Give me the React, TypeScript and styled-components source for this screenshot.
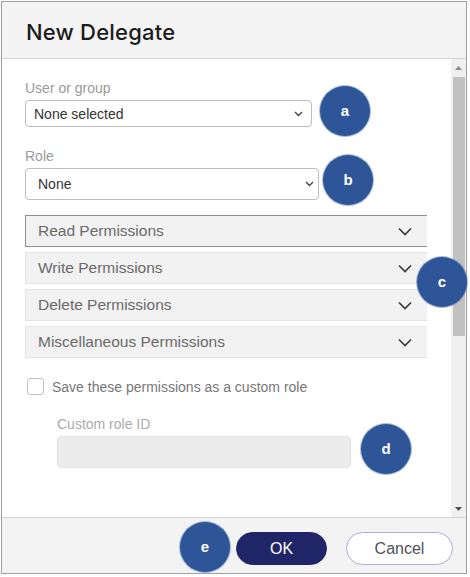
import React from "react";
import styled, { createGlobalStyle } from "styled-components";

const Global = createGlobalStyle`
  html, body { margin: 0; padding: 0; background: #fff; }
  body { padding: 1px 0 0 1px; font-family: "Liberation Sans", Arial, sans-serif; }
  * { box-sizing: border-box; }
`;

const Dialog = styled.div`
  position: relative;
  width: 466px;
  height: 573px;
  border: 1px solid #a0a0a0;
  display: flex;
  flex-direction: column;
  background: #fff;
`;

const Header = styled.div`
  flex: none;
  height: 57px;
  background: #f4f4f4;
  border-bottom: 1px solid #d3d3d3;
  display: flex;
  align-items: center;
  padding: 4px 0 0 24px;
`;

const Title = styled.h1`
  margin: 0;
  font-family: Inter, "Liberation Sans", sans-serif;
  font-size: 22px;
  font-weight: 500;
  color: #1c1c1c;
  letter-spacing: 0.2px;
`;

const Body = styled.div`
  flex: 1;
  min-height: 0;
  display: flex;
`;

const Content = styled.div`
  flex: 1;
  overflow: hidden;
  padding: 21px 0 0 23px;
  display: flex;
  flex-direction: column;
`;

const Label = styled.div<{ $top?: number; $light?: boolean }>`
  font-size: 14px;
  line-height: 16px;
  color: ${(p) => (p.$light ? "#ababab" : "#9a9a9a")};
  margin-top: ${(p) => p.$top ?? 0}px;
  margin-bottom: 4px;
`;

const Select = styled.div<{ $w: number; $h: number; $pl: number; $pr: number }>`
  width: ${(p) => p.$w}px;
  height: ${(p) => p.$h}px;
  border: 1px solid #bcbcbc;
  border-radius: 4px;
  display: flex;
  align-items: center;
  justify-content: space-between;
  padding: 0 ${(p) => p.$pr}px 0 ${(p) => p.$pl}px;
  font-size: 14px;
  color: #333;
  background: #fff;
`;

const Accordion = styled.div`
  margin-top: 15px;
  display: flex;
  flex-direction: column;
  gap: 5px;
`;

const Row = styled.div<{ $focused?: boolean }>`
  width: 402px;
  height: 32px;
  background: #f2f2f2;
  border: 1px solid ${(p) => (p.$focused ? "#8e8e8e" : "#e4e4e4")};
  border-right: none;
  display: flex;
  align-items: center;
  justify-content: space-between;
  padding: 0 15px 0 12px;
  font-size: 15.5px;
  color: #6a6a6a;
`;

const CheckRow = styled.label`
  margin-top: 20px;
  margin-left: 2px;
  display: flex;
  align-items: center;
  gap: 8px;
  font-size: 14px;
  line-height: 16px;
  color: #777;
`;

const Box = styled.span`
  width: 17px;
  height: 17px;
  border: 1px solid #c2c2c2;
  border-radius: 3px;
  background: #fff;
`;

const Custom = styled.div`
  margin-left: 32px;
  margin-top: 21px;
  display: flex;
  flex-direction: column;
`;

const Input = styled.div`
  width: 294px;
  height: 32px;
  background: #ececec;
  border: 1px solid #e3e3e3;
  border-radius: 4px;
`;

const Scrollbar = styled.div`
  flex: none;
  width: 15px;
  background: #f0f0f0;
  display: flex;
  flex-direction: column;
  align-items: center;
`;

const Arrow = styled.div`
  height: 17px;
  display: flex;
  align-items: center;
  justify-content: center;
`;

const Thumb = styled.div`
  width: 12px;
  height: 259px;
  margin-top: 1px;
  background: #c1c1c1;
`;

const Spacer = styled.div`
  flex: 1;
`;

const Footer = styled.div`
  flex: none;
  height: 56px;
  background: #f3f3f3;
  border-top: 1px solid #d5d5d5;
  display: flex;
  justify-content: flex-end;
  align-items: flex-start;
  padding: 14px 13px 0 0;
  gap: 19px;
`;

const Button = styled.button<{ $primary?: boolean; $w: number }>`
  width: ${(p) => p.$w}px;
  height: 33px;
  border-radius: 17px;
  font-family: "Liberation Sans", Arial, sans-serif;
  font-size: 16px;
  cursor: pointer;
  background: ${(p) => (p.$primary ? "#1f2566" : "#fff")};
  color: ${(p) => (p.$primary ? "#fff" : "#50505c")};
  border: ${(p) => (p.$primary ? "1px solid #1f2566" : "1.5px solid #a9acd8")};
`;

const Callout = styled.div<{ $x: number; $y: number }>`
  position: absolute;
  left: ${(p) => p.$x}px;
  top: ${(p) => p.$y}px;
  width: 50px;
  height: 50px;
  border-radius: 50%;
  background: #2e5597;
  box-shadow: 0 0 0 1px rgba(80, 120, 180, 0.5);
  color: #fff;
  display: flex;
  align-items: center;
  justify-content: center;
  font-family: "Liberation Sans", Arial, sans-serif;
  font-weight: 700;
  font-size: 15px;
  padding-bottom: 1px;
`;

const SmallChevron = () => (
  <svg width="9" height="6" viewBox="0 0 9 6">
    <polyline points="1,1 4.5,4.5 8,1" fill="none" stroke="#444" strokeWidth="1.4" />
  </svg>
);

const BigChevron = () => (
  <svg width="14" height="9" viewBox="0 0 14 9">
    <polyline points="1,1.5 7,7.5 13,1.5" fill="none" stroke="#3a3a3a" strokeWidth="1.7" />
  </svg>
);

const UpTri = () => (
  <svg width="7" height="4" viewBox="0 0 7 4">
    <polygon points="0,4 3.5,0 7,4" fill="#8a8a8a" />
  </svg>
);

const DownTri = () => (
  <svg width="7" height="4" viewBox="0 0 7 4">
    <polygon points="0,0 7,0 3.5,4" fill="#505050" />
  </svg>
);

const permissions = [
  "Read Permissions",
  "Write Permissions",
  "Delete Permissions",
  "Miscellaneous Permissions",
];

export default function App() {
  return (
    <>
      <Global />
      <Dialog>
        <Header>
          <Title>New Delegate</Title>
        </Header>
        <Body>
          <Content>
            <Label>User or group</Label>
            <Select $w={287} $h={27} $pl={8} $pr={8}>
              <span>None selected</span>
              <SmallChevron />
            </Select>
            <Label $top={21}>Role</Label>
            <Select $w={294} $h={32} $pl={12} $pr={4}>
              <span>None</span>
              <SmallChevron />
            </Select>
            <Accordion>
              {permissions.map((p, i) => (
                <Row key={p} $focused={i === 0}>
                  <span>{p}</span>
                  <BigChevron />
                </Row>
              ))}
            </Accordion>
            <CheckRow>
              <Box />
              <span>Save these permissions as a custom role</span>
            </CheckRow>
            <Custom>
              <Label $light>Custom role ID</Label>
              <Input />
            </Custom>
          </Content>
          <Scrollbar>
            <Arrow>
              <UpTri />
            </Arrow>
            <Thumb />
            <Spacer />
            <Arrow>
              <DownTri />
            </Arrow>
          </Scrollbar>
        </Body>
        <Footer>
          <Button $primary $w={91}>OK</Button>
          <Button $w={107}>Cancel</Button>
        </Footer>
        <Callout $x={318} $y={84}>a</Callout>
        <Callout $x={321} $y={153}>b</Callout>
        <Callout $x={415} $y={255}>c</Callout>
        <Callout $x={359} $y={422}>d</Callout>
        <Callout $x={178} $y={520}>e</Callout>
      </Dialog>
    </>
  );
}
